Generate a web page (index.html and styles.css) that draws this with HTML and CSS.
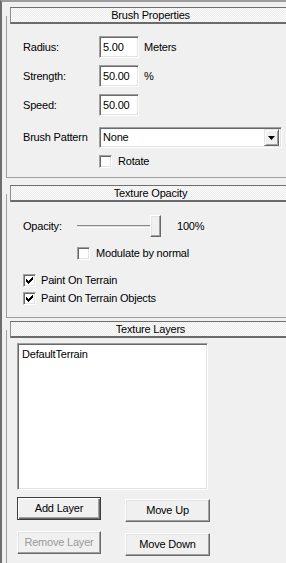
FILE: index.html
```html
<!DOCTYPE html>
<html>
<head>
<meta charset="utf-8">
<link rel="stylesheet" href="styles.css">
</head>
<body>
<div class="page">
  <section class="group g1">
    <div class="gtitle-wrap"><div class="gtitle">Brush Properties</div></div>
    <div class="gbody">
      <div class="frow"><span class="lbl">Radius:</span><span class="edit">5.00</span><span class="unit">Meters</span></div>
      <div class="frow r-strength"><span class="lbl">Strength:</span><span class="edit">50.00</span><span class="unit">%</span></div>
      <div class="frow r-speed"><span class="lbl">Speed:</span><span class="edit">50.00</span></div>
      <div class="frow r-pattern"><span class="lbl">Brush Pattern</span>
        <div class="combo"><span class="combo-text">None</span><span class="combo-btn"><svg width="7" height="4" viewBox="0 0 7 4"><path d="M0 0h7L3.5 4z" fill="#000"/></svg></span></div>
      </div>
      <div class="frow r-rotate"><span class="chk"><span class="box"></span><span class="ctext">Rotate</span></span></div>
    </div>
  </section>

  <section class="group g2">
    <div class="gtitle-wrap"><div class="gtitle">Texture Opacity</div></div>
    <div class="gbody">
      <div class="frow r-opacity"><span class="lbl lbl-op">Opacity:</span>
        <div class="slider"><span class="track"></span><span class="thumb"></span></div>
        <span class="pct">100%</span>
      </div>
      <div class="frow r-modulate"><span class="chk"><span class="box"></span><span class="ctext">Modulate by normal</span></span></div>
      <div class="frow r-paint"><span class="chk"><span class="box"><svg width="7" height="7" viewBox="0 0 7 7"><path d="M6 0h1v1h-1zM5 1h2v1h-2zM0 2h1v1h-1zM4 2h3v1h-3zM0 3h2v1h-2zM3 3h3v1h-3zM0 4h5v1h-5zM1 5h3v1h-3zM2 6h1v1h-1z" fill="#000"/></svg></span><span class="ctext">Paint On Terrain</span></span></div>
      <div class="frow r-paintobj"><span class="chk"><span class="box"><svg width="7" height="7" viewBox="0 0 7 7"><path d="M6 0h1v1h-1zM5 1h2v1h-2zM0 2h1v1h-1zM4 2h3v1h-3zM0 3h2v1h-2zM3 3h3v1h-3zM0 4h5v1h-5zM1 5h3v1h-3zM2 6h1v1h-1z" fill="#000"/></svg></span><span class="ctext">Paint On Terrain Objects</span></span></div>
    </div>
  </section>

  <section class="group g3">
    <div class="gtitle-wrap"><div class="gtitle">Texture Layers</div></div>
    <div class="gbody">
      <div class="list"><div class="item">DefaultTerrain</div></div>
      <div class="btns">
        <span class="btn btn-default">Add Layer</span>
        <span class="btn btn-right">Move Up</span>
        <span class="btn btn-disabled">Remove Layer</span>
        <span class="btn btn-right">Move Down</span>
      </div>
    </div>
  </section>
</div>
</body>
</html>
```
FILE: styles.css
```css
* { box-sizing: border-box; }
html, body { margin: 0; padding: 0; }
body {
  width: 286px;
  height: 563px;
  overflow: hidden;
  background: #f0f0f0;
  font-family: "Liberation Sans", Arial, sans-serif;
  font-size: 11px;
  letter-spacing: -0.2px;
  line-height: 13px;
  color: #000;
}
.page {
  height: 563px;
  border-top: 2px solid #9c9c9c;
  border-left: 2px solid #6d6d6d;
  display: flex;
  flex-direction: column;
  overflow: hidden;
}
.group {
  margin-left: 4px;
  margin-right: -4px;
  display: flex;
  flex-direction: column;
}
.g1 { margin-top: 5px; }
.g2 { margin-top: 7px; }
.g3 { margin-top: 3px; flex: 1; }
.gtitle-wrap {
  padding-left: 4px;
  background: linear-gradient(#a0a0a0, #a0a0a0) left bottom / 1px 50% no-repeat;
}
.gtitle {
  height: 17px;
  border-top: 1px solid #6e6e6e;
  border-left: 1px solid #8c8c8c;
  border-bottom: 2px solid #6a6a6a;
  background: repeating-conic-gradient(#fdfdfd 0 25%, #ebebeb 0 50%) 0 0 / 2px 2px;
  text-align: center;
  line-height: 14px;
}
.gbody {
  border-left: 1px solid #a0a0a0;
  border-bottom: 1px solid #a0a0a0;
  padding-left: 16px;
}
.g1 .gbody { padding-top: 12px; padding-bottom: 9px; }
.g2 .gbody { padding-top: 13px; padding-bottom: 12px; }
.g3 .gbody { padding-top: 5px; padding-left: 10px; flex: 1; border-bottom: none; }

.frow { display: flex; align-items: center; }
.lbl { width: 76px; }
.r-strength { margin-top: 7px; }
.r-speed { margin-top: 7px; }
.r-pattern { margin-top: 11px; }
.r-rotate { margin-top: 7px; padding-left: 76px; }

.edit, .combo, .list, .box {
  background: #fff;
  border: 1px solid;
  border-color: #a0a0a0 #fff #fff #a0a0a0;
  box-shadow: inset 1px 1px #696969, inset -1px -1px #e3e3e3;
}
.edit {
  width: 40px;
  height: 22px;
  padding-left: 3px;
  line-height: 20px;
}
.unit { margin-left: 5px; }

.combo {
  width: 183px;
  height: 21px;
  display: flex;
  align-items: center;
  padding: 2px;
}
.combo-text { flex: 1; padding-left: 1px; }
.combo-btn {
  width: 15px;
  height: 17px;
  display: flex;
  align-items: center;
  justify-content: center;
  background: #f0f0f0;
  border: 1px solid;
  border-color: #e3e3e3 #696969 #696969 #e3e3e3;
  box-shadow: inset 1px 1px #fff, inset -1px -1px #a0a0a0;
}

.chk { display: flex; align-items: center; }
.box {
  width: 13px;
  height: 13px;
  display: flex;
  align-items: center;
  justify-content: center;
}
.box svg { display: block; }
.ctext { margin-left: 6px; }

.lbl-op { width: 54px; }
.slider {
  width: 84px;
  height: 22px;
  display: flex;
  align-items: center;
}
.track {
  flex: 1;
  height: 3px;
  border-top: 1px solid #8a8a8a;
  border-bottom: 1px solid #fff;
  background: #dcdcdc;
}
.thumb {
  width: 11px;
  height: 22px;
  background: #f0f0f0;
  border: 1px solid;
  border-color: #fff #696969 #696969 #fff;
  box-shadow: inset -1px -1px #a0a0a0, inset 1px 1px #e3e3e3;
}
.pct { margin-left: 16px; }
.r-modulate { margin-top: 10px; padding-left: 54px; }
.r-paint { margin-top: 14px; }
.r-paintobj { margin-top: 5px; }
.r-paint .ctext, .r-paintobj .ctext { margin-left: 5px; }

.list {
  width: 191px;
  height: 147px;
  padding: 4px 4px 2px;
}
.btns {
  margin-top: 7px;
  display: grid;
  grid-template-columns: 84px 85px;
  column-gap: 24px;
  row-gap: 9px;
}
.btn {
  height: 23px;
  display: flex;
  align-items: center;
  justify-content: center;
  background: #f0f0f0;
  border: 1px solid;
  border-color: #fff #696969 #696969 #fff;
  box-shadow: inset -1px -1px #a0a0a0, inset 1px 1px #e3e3e3;
}
.btn-right { margin-top: 2px; }
.btn-default {
  border-color: #3c3c3c;
  box-shadow: inset 1px 1px #fff, inset -1px -1px #696969, inset -2px -2px #a0a0a0;
}
.btn-disabled { color: #9a9a9a; }
```
